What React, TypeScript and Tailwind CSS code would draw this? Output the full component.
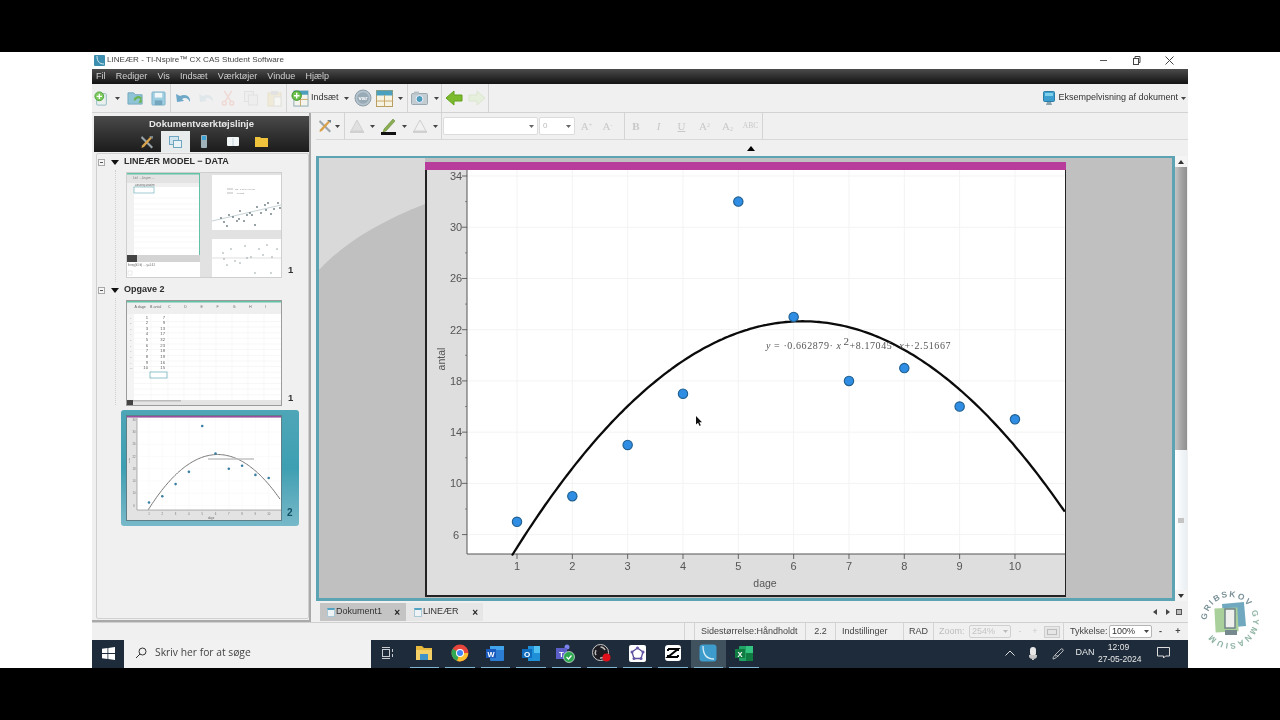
import React from "react";

const xs = (v: number) => 517 + (v - 1) * 55.33;
const ys = (v: number) => 534.6 - (v - 6) * 12.807;
const pts = [7, 9, 13, 17, 32, 23, 18, 19, 16, 15];
const f = (x: number) => -0.662879 * x * x + 8.17045 * x - 2.51667;
const curvePoints: string[] = [];
for (let x = 0.91; x < 10.9; x += 0.05) curvePoints.push(`${xs(x).toFixed(1)},${ys(f(x)).toFixed(1)}`);
curvePoints.push(`${xs(10.9).toFixed(1)},${ys(f(10.9)).toFixed(1)}`);
const curve = curvePoints.join(" ");

function Caret({ c = "#444" }: { c?: string }) {
  return <svg width="5" height="3" viewBox="0 0 5 3"><path d="M0 0h5L2.5 3z" fill={c} /></svg>;
}
function Slot({ className, children }: { className: string; children?: React.ReactNode }) {
  return <div className={`flex h-full shrink-0 items-center justify-center ${className}`}>{children}</div>;
}
function Sep({ className = "" }: { className?: string }) {
  return <div className={`h-full w-px shrink-0 bg-[#d4d4d4] ${className}`} />;
}

const NewDoc = () => (
  <svg width="15" height="15" viewBox="0 0 17 17"><rect x="3" y="3" width="11" height="13" rx="1" fill="#e9f0ee" stroke="#8bb6bf" /><circle cx="6" cy="6" r="5" fill="#7ccb5c" stroke="#4c9f3a" /><path d="M6 3v6M3 6h6" stroke="#fff" strokeWidth="1.500" /></svg>
);
const OpenDoc = () => (
  <svg width="17" height="16" viewBox="0 0 18 17"><path d="M1 3h6l2 2h7v10H1z" fill="#8fc3d6" stroke="#75a8bd" /><path d="M8 11a4 4 0 0 1 7-2" stroke="#6bb54f" strokeWidth="2.400" fill="none" /><path d="M12 14l4-1-1-5z" fill="#6bb54f" /></svg>
);
const Save = () => (
  <svg width="15" height="15" viewBox="0 0 16 16"><rect x="1" y="1" width="14" height="14" rx="1" fill="#9ccde0" stroke="#82b4ca" /><rect x="4" y="2" width="8" height="5" fill="#f2f7f9" /><rect x="4" y="10" width="8" height="5" fill="#74a7be" /></svg>
);
const Undo = ({ o = "#6da8c8" }: { o?: string }) => (
  <svg width="18" height="14" viewBox="0 0 18 14"><path d="M1 3l1 8 7-1-2-2c3-2 6-1 8 3 1-5-4-9-10-6z" fill={o} /></svg>
);
const Cut = () => (
  <svg width="14" height="16" viewBox="0 0 14 17" fill="none" stroke="#efd9d5" strokeWidth="1.600"><path d="M3 1l7 11M11 1L4 12" /><circle cx="3" cy="14" r="2" /><circle cx="11" cy="14" r="2" /></svg>
);
const Copy = () => (
  <svg width="16" height="16" viewBox="0 0 16 16" fill="#eeeeee" stroke="#e2e2e2"><rect x="1.500" y="1.500" width="9" height="10" /><rect x="5.500" y="5" width="9" height="10" /></svg>
);
const Paste = () => (
  <svg width="15" height="17" viewBox="0 0 15 17"><rect x="1" y="3" width="13" height="13" fill="#f0ead8" stroke="#e6dfcc" /><rect x="4" y="1" width="7" height="4" fill="#e2e2e2" /><rect x="7" y="7" width="7" height="9" fill="#f6f6f2" stroke="#e2e2e2" /></svg>
);
const Insert = () => (
  <svg width="18" height="17" viewBox="0 0 19 18"><rect x="3" y="1" width="15" height="16" fill="#f4f4ec" stroke="#8aa9b2" /><rect x="3" y="1" width="15" height="4" fill="#4aa0bd" /><path d="M10 5v12M3 10h15" stroke="#c6a868" /><circle cx="6" cy="6" r="5" fill="#6cc24a" stroke="#3c8f2a" /><path d="M6 3v6M3 6h6" stroke="#fff" strokeWidth="1.500" /></svg>
);
const Var = () => (
  <svg width="18" height="18" viewBox="0 0 18 18"><circle cx="9" cy="9" r="8" fill="#b4c3cc" stroke="#8d9ea9" /><circle cx="9" cy="9" r="5.800" fill="#97aab6" /><text x="9" y="11" textAnchor="middle" fontSize="6" fontWeight="700" fontFamily="Liberation Sans" fill="#fff">var</text></svg>
);
const TableIc = () => (
  <svg width="17" height="17" viewBox="0 0 17 17"><rect x="0.500" y="0.500" width="16" height="16" fill="#f7f3e3" stroke="#b99e63" /><rect x="0.500" y="0.500" width="16" height="5" fill="#4aa0bd" /><path d="M8.500 5v12M1 11h15" stroke="#c6a868" /></svg>
);
const Camera = () => (
  <svg width="17" height="14" viewBox="0 0 17 14"><rect x="0.500" y="2.500" width="16" height="11" rx="1" fill="#c2ccd1" stroke="#9aa8b0" /><rect x="3" y="0.500" width="5" height="3" fill="#b5c0c6" /><circle cx="8.500" cy="8" r="3.500" fill="#4d9dbd" stroke="#eef" /></svg>
);
const Arrow = ({ c, s, flip }: { c: string; s: string; flip?: boolean }) => (
  <svg width="18" height="16" viewBox="0 0 18 16" className={flip ? "-scale-x-100" : ""}><path d="M1 8l8-7v4h8v6H9v4z" fill={c} stroke={s} /></svg>
);
const Monitor = () => (
  <svg width="12" height="15" viewBox="0 0 12 15"><rect x="0.500" y="0.500" width="11" height="10" rx="1" fill="#3d9fd0" stroke="#2d7ea6" /><rect x="2" y="2" width="8" height="3" fill="#7fd0ea" /><path d="M4 11h4l1 3H3z" fill="#8aa3ad" /></svg>
);
const Tools = ({ w = 14 }: { w?: number }) => (
  <svg width={w} height={w} viewBox="0 0 14 14"><path d="M2 1l11 11-1.500 1.500L1 3z" fill="#9aa6ab" /><path d="M11 1l2 1-9 10-2.500 1L2 10.500z" fill="#d9a24d" /><path d="M9 1h4v3z" fill="#75858c" /></svg>
);
const TriUp = ({ c = "#e0e0e0", s = "#d0d0d0" }: { c?: string; s?: string }) => (
  <svg width="16" height="16" viewBox="0 0 16 16"><path d="M8 2l6 11H2z" fill={c} stroke={s} /><rect x="1" y="13" width="14" height="2" fill={s} /></svg>
);
const Pen = () => (
  <svg width="17" height="17" viewBox="0 0 17 17"><path d="M4 11L13 1l2 2-9 10-3 1z" fill="#8aae52" stroke="#5f7d2d" strokeWidth="0.500" /><rect x="1" y="14" width="15" height="3" fill="#111" /></svg>
);

function TB({ children, className = "" }: { children: React.ReactNode; className?: string }) {
  return <span className={`block text-center font-['Liberation_Serif',serif] text-[11px] text-[#c8c8c8] ${className}`}>{children}</span>;
}

function Thumb1() {
  return (
    <svg width="154" height="104" viewBox="0 0 154 104" className="block bg-white">
      <rect x="0" y="0" width="73" height="104" fill="#fff" />
      <rect x="0" y="1" width="73" height="9" fill="#e3e3e3" />
      <text x="6" y="6" fontSize="3" fill="#777" fontFamily="Liberation Sans">LinI …Lin.pm …</text>
      <rect x="0" y="10" width="73" height="4" fill="#efefef" />
      <text x="8" y="13" fontSize="3" fill="#666" fontFamily="Liberation Sans">=xsseq  =rasim</text>
      <rect x="0" y="10" width="7" height="72" fill="#f1f1f1" />
      <rect x="7" y="14" width="20" height="6" fill="#fff" stroke="#5fa9b4" strokeWidth="0.600" />
      <path d="M7 25h66M7 31h66M7 36h66M7 42h66M7 47h66M7 53h66M7 58h66M7 64h66M7 69h66M7 75h66" stroke="#f2f2f2" strokeWidth="0.600" />
      <rect x="0" y="82" width="73" height="7" fill="#d4d4d4" />
      <rect x="0" y="82" width="10" height="7" fill="#444" />
      <text x="1" y="93" fontSize="2.800" fill="#666" fontFamily="Liberation Sans">linreg(b1:b) …  y=1.61</text>
      <rect x="1" y="98" width="4" height="4" fill="#fff" stroke="#ccc" strokeWidth="0.400" />
      <rect x="0" y="0" width="73" height="1.500" fill="#63c2a6" />
      <rect x="72" y="0" width="1.500" height="82" fill="#63c2a6" />
      <rect x="73" y="0" width="81" height="104" fill="#e2e2e2" />
      <rect x="85" y="2" width="69" height="55" fill="#fff" />
      <rect x="85" y="66" width="69" height="38" fill="#fff" />
      <path d="M85 48L154 32" stroke="#9fb4b8" strokeWidth="0.600" />
      {[[94,45],[97,49],[100,53],[102,42],[106,44],[110,48],[113,38],[117,48],[120,42],[123,40],[128,52],[130,34],[134,40],[138,32],[141,30],[144,41],[147,36],[151,30],[153,35],[125,42],[112,46],[139,37]].map(([x, y], i) => (
        <circle key={i} cx={x} cy={y} r="0.900" fill="#66767c" />
      ))}
      <path d="M85 85h69" stroke="#bdbdbd" strokeWidth="0.500" />
      {[[96,80],[100,92],[104,76],[108,88],[113,90],[118,73],[124,84],[128,100],[132,76],[136,82],[140,72],[145,84],[150,76],[120,85],[97,86],[144,100]].map(([x, y], i) => (
        <circle key={i} cx={x} cy={y} r="0.700" fill="#7a8a90" />
      ))}
      <path d="M100 16h6M100 20h6" stroke="#777" strokeWidth="0.500" />
      <text x="108" y="17" fontSize="2.400" fill="#888" fontFamily="Liberation Sans">m1=1.6x(x)+k:0.87</text>
      <text x="108" y="21" fontSize="2.400" fill="#888" fontFamily="Liberation Sans">=1.600fit</text>
    </svg>
  );
}

function Thumb2() {
  const d = [7, 9, 13, 17, 32, 23, 18, 19, 16, 15];
  const cols = ["C", "D", "E", "F", "G", "H", "I"];
  return (
    <svg width="154" height="104" viewBox="0 0 154 104" className="block bg-white">
      <rect width="154" height="13" fill="#efefef" />
      <rect width="154" height="1.500" fill="#63c2a6" />
      <g fontSize="3.600" fill="#666" fontFamily="Liberation Sans">
        <text x="7.500" y="6.500">A dage</text>
        <text x="23" y="6.500">B antal</text>
        {cols.map((c, i) => <text key={c} x={41 + i * 16.200} y="6.500">{c}</text>)}
      </g>
      <rect y="13" width="7" height="86" fill="#f4f4f4" />
      <path d="M7 20.500h147M7 26h147M7 31.700h147M7 37.300h147M7 43h147M7 48.600h147M7 54.300h147M7 60h147M7 65.500h147M7 71.200h147M7 76.800h147M7 82.500h147M7 88h147M7 93.700h147" stroke="#f1f1f1" strokeWidth="0.600" />
      <path d="M24 13v86M41 13v86M57 13v86M73 13v86M89 13v86M105 13v86M121 13v86M137 13v86" stroke="#f4f4f4" strokeWidth="0.600" />
      {d.map((v, i) => (
        <g key={i} fontSize="4.200" fill="#5c5c5c" fontFamily="Liberation Sans">
          <text x="3" y={17.500 + i * 5.650} fontSize="2.400" fill="#aaa">{i + 1}</text>
          <text x="21" y={17.500 + i * 5.650} textAnchor="end">{i + 1}</text>
          <text x="38" y={17.500 + i * 5.650} textAnchor="end">{v}</text>
        </g>
      ))}
      <rect x="23" y="71" width="17" height="6" fill="#fff" stroke="#5fa9b4" strokeWidth="0.700" />
      <rect y="99" width="154" height="5" fill="#e4e4e4" />
      <rect x="0" y="99" width="54" height="1.500" fill="#bbb" />
      <rect x="0" y="99" width="6" height="5" fill="#444" />
    </svg>
  );
}

function Thumb3() {
  const tx = (v: number) => 22 + (v - 1) * 13.300;
  const ty = (v: number) => 89.500 - (v - 6) * 3.060;
  const p: string[] = [];
  for (let x = 0.95; x <= 10.9; x += 0.1) p.push(`${tx(x).toFixed(1)},${ty(f(x)).toFixed(1)}`);
  return (
    <svg width="154" height="104" viewBox="0 0 154 104" className="block">
      <rect width="154" height="104" fill="#e3e3e3" />
      <rect x="10" y="2" width="144" height="92" fill="#fff" />
      <rect width="154" height="1.500" fill="#9a4fa0" />
      {[6, 10, 14, 18, 22, 26, 30, 34].map((v) => (
        <g key={v}>
          <path d={`M10 ${ty(v)}h144`} stroke="#f6f6f6" strokeWidth="0.500" />
          <text x="7" y={ty(v) + 1} fontSize="2.800" textAnchor="middle" fill="#777" fontFamily="Liberation Sans">{v}</text>
        </g>
      ))}
      {pts.map((v, i) => (
        <g key={i}>
          <path d={`M${tx(i + 1)} 2v92`} stroke="#f7f7f7" strokeWidth="0.500" />
          <text x={tx(i + 1)} y="98.500" fontSize="2.800" textAnchor="middle" fill="#777" fontFamily="Liberation Sans">{i + 1}</text>
        </g>
      ))}
      <path d="M10 2v92h144" fill="none" stroke="#666" strokeWidth="0.500" />
      <polyline points={p.join(" ")} fill="none" stroke="#777" strokeWidth="1" />
      {pts.map((v, i) => <circle key={i} cx={tx(i + 1)} cy={ty(v)} r="1.300" fill="#3a7ea3" />)}
      <rect x="81" y="42" width="46" height="2" fill="#bdbdbd" opacity="0.700" />
      <text x="81" y="103" fontSize="2.800" fill="#666" fontFamily="Liberation Sans">dage</text>
      <text x="3" y="47" fontSize="2.400" fill="#666" fontFamily="Liberation Sans" transform="rotate(-90 3 47)">antal</text>
    </svg>
  );
}

function TreeHead({ label }: { label: string }) {
  return (
    <div className="flex h-[16px] shrink-0 items-center">
      <div className="ml-[1px] flex h-[7px] w-[7px] items-center justify-center border border-[#a8a8a8] bg-[#f6f6f6]"><div className="h-px w-[3px] bg-[#555]" /></div>
      <div className="ml-[6px] h-0 w-0 border-x-[4px] border-t-[5px] border-x-transparent border-t-[#111]" />
      <span className="ml-[5px] text-[9px] font-bold text-[#2c2c2c]">{label}</span>
    </div>
  );
}

function Plot() {
  return (
    <svg width="641" height="435" viewBox="425 162 641 435" className="block">
      <rect x="425" y="162" width="641" height="435" fill="#dedede" />
      <rect x="467" y="170" width="598" height="384" fill="#fff" />
      {[6, 10, 14, 18, 22, 26, 30, 34].map((v) => (
        <g key={v}>
          <path d={`M467 ${ys(v)}H1065`} stroke="#f3f3f3" />
          <path d={`M462 ${ys(v)}H467`} stroke="#666" />
          {v < 34 && <path d={`M465 ${ys(v + 2)}H467`} stroke="#888" />}
          <text x="456" y={ys(v) + 4} fontSize="11" textAnchor="middle" fill="#555" fontFamily="Liberation Sans">{v}</text>
        </g>
      ))}
      {pts.map((_, i) => (
        <g key={i}>
          <path d={`M${xs(i + 1)} 170V554`} stroke="#f3f3f3" />
          <path d={`M${xs(i + 1)} 554v5`} stroke="#666" />
          <text x={xs(i + 1)} y="570" fontSize="11" textAnchor="middle" fill="#555" fontFamily="Liberation Sans">{i + 1}</text>
        </g>
      ))}
      <path d="M467 170V554H1065" fill="none" stroke="#555" />
      <text x="445" y="359" fontSize="10.500" textAnchor="middle" fill="#555" fontFamily="Liberation Sans" transform="rotate(-90 445 359)">antal</text>
      <text x="765" y="587" fontSize="10.500" textAnchor="middle" fill="#555" fontFamily="Liberation Sans">dage</text>
      <polyline points={curve} fill="none" stroke="#0b0b0b" strokeWidth="2.300" />
      {pts.map((v, i) => (
        <circle key={i} cx={xs(i + 1)} cy={ys(v)} r="4.700" fill="#2f8de4" stroke="#1f5f8f" strokeWidth="1.100" />
      ))}
      <text x="766" y="349" fontSize="10" fill="#555" fontFamily="Liberation Serif" letterSpacing="0.580">
        <tspan fontStyle="italic">y</tspan> = ·0.662879· <tspan fontStyle="italic">x</tspan>
        <tspan dy="-4" dx="2" fontSize="11">2</tspan><tspan dy="4">+8.17045· <tspan fontStyle="italic">x</tspan>+·2.51667</tspan>
      </text>
      <path d="M696 416v8.500l2-1.800 1.600 3.300 1.200-.7-1.500-3.100h2.700z" fill="#111" />
      <rect x="425" y="162" width="641" height="8" fill="#b83c9c" />
      <rect x="425" y="170" width="2" height="427" fill="#222" />
      <rect x="1065" y="170" width="1.500" height="427" fill="#222" />
      <rect x="425" y="595" width="641" height="2" fill="#222" />
    </svg>
  );
}

function Logo() {
  return (
    <svg width="64" height="64" viewBox="0 0 64 64" className="block">
      <defs>
        <path id="ring" d="M9 33A23 23 0 1 1 55 33A23 23 0 1 1 9 33" />
      </defs>
      <rect x="25" y="16" width="22" height="24" fill="#6fa8bf" transform="rotate(-5 36 28)" />
      <rect x="17" y="21" width="23" height="24" fill="#a9cf9a" transform="rotate(-3 28 33)" />
      <rect x="27" y="22" width="10" height="19" fill="#eef0ee" stroke="#6d7f85" strokeWidth="1.400" />
      <rect x="27" y="43" width="12" height="5" fill="#76898e" />
      <text fontSize="8.400" fontFamily="Liberation Sans" fontWeight="700" letterSpacing="1.700">
        <textPath href="#ring">
          <tspan fill="#7a9198">GRIBSKOV</tspan>
          <tspan fill="#8fb4a4"> GYMNASIUM</tspan>
        </textPath>
      </text>
    </svg>
  );
}

const Win = () => <svg width="13" height="13" viewBox="0 0 13 13" fill="#fff"><path d="M0 1.800l5.500-.8v5H0zM6.300 1L13 0v6H6.300zM0 7h5.500v5L0 11.200zM6.300 7H13v6l-6.700-1z" /></svg>;
const Chrome = () => (
  <svg width="18" height="18" viewBox="0 0 18 18"><circle cx="9" cy="9" r="8.500" fill="#e8453c" /><path d="M9 9L1.600 4.800A8.500 8.500 0 0 0 6 17z" fill="#33a853" /><path d="M9 9h8.200A8.500 8.500 0 0 1 6 17z" fill="#fbc02d" /><circle cx="9" cy="9" r="4" fill="#fff" /><circle cx="9" cy="9" r="3" fill="#4285f4" /></svg>
);
const Word = () => (
  <svg width="18" height="17" viewBox="0 0 18 17"><rect x="4" y="1" width="14" height="15" rx="1" fill="#2b7cd3" /><rect x="4" y="1" width="14" height="4" fill="#41a5ee" /><rect x="0" y="4" width="10" height="9" fill="#185abd" /><text x="5" y="11.500" textAnchor="middle" fontSize="7.500" fontWeight="700" fontFamily="Liberation Sans" fill="#fff">W</text></svg>
);
const Outlook = () => (
  <svg width="18" height="17" viewBox="0 0 18 17"><rect x="6" y="1" width="12" height="15" fill="#1f8fd8" /><rect x="12" y="1" width="6" height="7" fill="#50c1f0" /><rect x="0" y="4" width="10" height="9" fill="#0f6cbd" /><text x="5" y="11.500" textAnchor="middle" fontSize="8" fontWeight="700" fontFamily="Liberation Sans" fill="#fff">O</text></svg>
);
const Teams = () => (
  <svg width="20" height="19" viewBox="0 0 20 19"><circle cx="11" cy="3" r="2.500" fill="#7b83eb" /><rect x="0" y="4" width="11" height="11" fill="#5b5fc7" /><text x="5.500" y="12.500" textAnchor="middle" fontSize="8" fontWeight="700" fontFamily="Liberation Sans" fill="#fff">T</text><circle cx="13" cy="13" r="5.500" fill="#2da84f" stroke="#fff" strokeWidth="0.600" /><path d="M10.500 13l2 2 3-3.500" fill="none" stroke="#fff" strokeWidth="1.200" /></svg>
);
const Obs = () => (
  <svg width="19" height="18" viewBox="0 0 19 18"><circle cx="8.500" cy="8.500" r="8" fill="#1c1c22" stroke="#ccc" /><path d="M8.500 3a5 5 0 0 1 4.500 3M4 11a5 5 0 0 1 0-5M8 14a5 5 0 0 0 5-3" stroke="#bbb" strokeWidth="1.500" fill="none" /><circle cx="14.500" cy="13.500" r="4" fill="#e0111b" /></svg>
);
const Geo = () => (
  <svg width="17" height="17" viewBox="0 0 17 17"><rect width="17" height="17" rx="2" fill="#fff" /><path d="M8.500 3L14 7l-2 6.500H5L3 7z" fill="none" stroke="#5c4d99" strokeWidth="1.300" /><g fill="#6557a8"><circle cx="8.500" cy="3" r="1.500" /><circle cx="14" cy="7" r="1.500" /><circle cx="12" cy="13.500" r="1.500" /><circle cx="5" cy="13.500" r="1.500" /><circle cx="3" cy="7" r="1.500" /></g></svg>
);
const Capcut = () => (
  <svg width="16" height="16" viewBox="0 0 16 16"><rect width="16" height="16" rx="3" fill="#fff" /><path d="M3 4h10L3 12h10" fill="none" stroke="#000" strokeWidth="2" /><path d="M3 4v2M13 4v2M3 10v2M13 10v2" stroke="#000" strokeWidth="2" /></svg>
);
const Nspire = () => (
  <svg width="18" height="18" viewBox="0 0 18 18"><rect x="0.500" y="0.500" width="17" height="17" rx="3" fill="#3d9ccb" /><path d="M4 2c0 8 3 13 11 13" fill="none" stroke="#d7eef7" strokeWidth="1.300" /></svg>
);
const Excel = () => (
  <svg width="18" height="17" viewBox="0 0 18 17"><rect x="4" y="1" width="14" height="15" rx="1" fill="#21a366" /><rect x="11" y="1" width="7" height="7" fill="#33c481" /><rect x="11" y="8" width="7" height="8" fill="#107c41" /><rect x="0" y="4" width="10" height="9" fill="#107c41" /><text x="5" y="11.500" textAnchor="middle" fontSize="7.500" fontWeight="700" fontFamily="Liberation Sans" fill="#fff">X</text></svg>
);

function TaskIcon({ children, active, run = true }: { children: React.ReactNode; active?: boolean; run?: boolean }) {
  return (
    <div className={`relative flex h-full w-[35.5px] shrink-0 items-center justify-center pb-[2px] ${active ? "bg-[#41525f]" : ""}`}>
      {children}
      {run && <div className="absolute inset-x-[3px] bottom-0 h-px bg-[#7fb4d4]" />}
    </div>
  );
}

export default function App() {
  return (
    <div className="flex h-[720px] w-[1280px] flex-col overflow-hidden bg-black font-['Liberation_Sans',sans-serif] text-[#333] blur-[0.4px]">
      <div className="h-[52px] shrink-0 bg-black" />
      <div className="flex h-[616px] shrink-0 bg-white">
        <div className="w-[92px] shrink-0 bg-white" />
        <div className="flex w-[1096px] shrink-0 flex-col bg-[#f0f0f0]">
          {/* title */}
          <div className="flex h-[17px] shrink-0 items-center bg-white">
            <svg width="11" height="11" viewBox="0 0 11 11" className="ml-[2px]"><rect width="11" height="11" rx="1" fill="#3c8fb0" /><path d="M3 1c0 5 2 8 7 8" fill="none" stroke="#d8eef6" strokeWidth="1" /></svg>
            <span className="ml-[2px] text-[8.100px] text-[#444]">LINEÆR - TI-Nspire™ CX CAS Student Software</span>
            <div className="ml-auto flex h-full items-center">
              <Slot className="w-[33px]"><div className="h-px w-[7px] bg-[#555]" /></Slot>
              <Slot className="w-[33px]"><svg width="9" height="9" viewBox="0 0 9 9" fill="none" stroke="#444"><rect x="1.500" y="2.500" width="5" height="6" /><path d="M3 2.500V.5h5v6H6.500" /></svg></Slot>
              <Slot className="mr-[2px] w-[33px]"><svg width="9" height="9" viewBox="0 0 9 9" stroke="#444"><path d="M.5.5l8 8M8.500.5l-8 8" /></svg></Slot>
            </div>
          </div>
          {/* menu */}
          <div className="flex h-[15px] shrink-0 items-center gap-[10.200px] bg-gradient-to-b from-[#4c4c4c] to-[#141414] pl-[4px] text-[9px] text-[#d0d0d0]">
            <span>Fil</span><span>Rediger</span><span>Vis</span><span>Indsæt</span><span>Værktøjer</span><span>Vindue</span><span>Hjælp</span>
          </div>
          {/* toolbar */}
          <div className="flex h-[29px] shrink-0 items-center border-b border-[#d2d2d2] bg-[#f0f0f0]">
            <Slot className="w-[17px] pl-[2px]"><NewDoc /></Slot>
            <Slot className="w-[16px]"><Caret /></Slot>
            <Slot className="w-[21px]"><OpenDoc /></Slot>
            <Slot className="w-[24px]"><Save /></Slot>
            <Sep />
            <Slot className="w-[25px]"><Undo /></Slot>
            <Slot className="w-[21px]"><Undo o="#dfe7ea" /></Slot>
            <Slot className="w-[22px]"><Cut /></Slot>
            <Slot className="w-[23px]"><Copy /></Slot>
            <Slot className="w-[24px]"><Paste /></Slot>
            <Sep />
            <Slot className="w-[24px] justify-end pr-[2px]"><Insert /></Slot>
            <Slot className="w-[29px] justify-start text-[9px] text-[#333]">Indsæt</Slot>
            <Slot className="w-[12px]"><Caret /></Slot>
            <Slot className="w-[21px]"><Var /></Slot>
            <Slot className="w-[22px]"><TableIc /></Slot>
            <Slot className="w-[10px]"><Caret /></Slot>
            <Sep className="ml-[2px]" />
            <Slot className="w-[23px]"><Camera /></Slot>
            <Slot className="w-[10px]"><Caret /></Slot>
            <Sep />
            <Slot className="w-[24px]"><Arrow c="#7dbb2e" s="#62a01c" /></Slot>
            <Slot className="w-[22px]"><Arrow c="#e6efdb" s="#dbe6d0" flip /></Slot>
            <Sep />
            <div className="ml-auto flex h-full items-center">
              <Monitor />
              <span className="ml-[3px] text-[9px] text-[#333]">Eksempelvisning af dokument</span>
              <Slot className="w-[10px]"><Caret /></Slot>
            </div>
          </div>
          {/* main */}
          <div className="flex h-[509px] shrink-0">
            <div className="flex h-full w-[219px] shrink-0 flex-col border-r-2 border-b-2 border-[#a9a9a9] pt-[3px] pl-[2px]">
              <div className="flex h-[36px] w-[215px] shrink-0 flex-col bg-gradient-to-b from-[#4a4a4a] to-[#1c1c1c]">
                <div className="h-[15px] text-center text-[9.500px] leading-[15px] font-bold text-[#e8e8e8]">Dokumentværktøjslinje</div>
                <div className="flex h-[21px] items-center pl-[43px]">
                  <Slot className="w-[24px] pr-[4px]"><Tools /></Slot>
                  <Slot className="w-[29px] bg-[#e8ecec]"><svg width="13" height="12" viewBox="0 0 13 12"><rect x="0.500" y="0.500" width="9" height="8" fill="#cfe4ee" stroke="#6fa6c0" /><rect x="4.500" y="4.500" width="8" height="7" fill="#e9f3f7" stroke="#6fa6c0" /></svg></Slot>
                  <Slot className="w-[28px]"><svg width="6" height="13" viewBox="0 0 6 13"><rect width="6" height="13" rx="1" fill="#9fb2ba" /><rect x="1" y="1" width="4" height="4" fill="#3fa4d6" /></svg></Slot>
                  <Slot className="w-[29px]"><svg width="12" height="9" viewBox="0 0 12 9"><rect width="12" height="9" rx="1" fill="#f2f6f7" /><path d="M6 1v8" stroke="#c4d4da" /></svg></Slot>
                  <Slot className="w-[28px]"><svg width="13" height="10" viewBox="0 0 13 10"><path d="M0 0h5l1 1h7v9H0z" fill="#f0c33c" /></svg></Slot>
                </div>
              </div>
              <div className="mt-px ml-[2px] flex h-[466px] w-[213px] flex-col rounded-[2px] border border-[#d0d0d0] bg-[#f0f0f0]">
                <TreeHead label="LINEÆR MODEL − DATA" />
                <div className="ml-[18px] flex h-[112px] shrink-0 items-end border-l border-dotted border-[#cfcfcf] pl-[11px]">
                  <div className="mb-[5px] shrink-0 bg-white shadow-[0_0_0_1px_#cfcfcf]"><Thumb1 /></div>
                  <span className="mb-[5px] ml-[7px] text-[9.500px] font-bold text-[#333]">1</span>
                </div>
                <TreeHead label="Opgave 2" />
                <div className="ml-[18px] flex h-[107px] shrink-0 items-end border-l border-dotted border-[#cfcfcf] pl-[11px]">
                  <div className="shrink-0 bg-white shadow-[0_0_0_1px_#9b9b9b]"><Thumb2 /></div>
                  <span className="ml-[7px] text-[9.500px] font-bold text-[#333]">1</span>
                </div>
                <div className="mt-[5px] ml-[24px] flex h-[116px] w-[178px] shrink-0 items-end rounded-[3px] bg-gradient-to-b from-[#4ea6b7] via-[#3e9fb2] to-[#77b9c9] p-[6px] pr-0">
                  <div className="shrink-0 shadow-[0_0_0_1px_#5f7f88]"><Thumb3 /></div>
                  <span className="ml-[6px] text-[10px] font-bold text-[#155064]">2</span>
                </div>
              </div>
            </div>
            <div className="ml-[5px] flex min-w-0 flex-1 flex-col">
              {/* doc toolbar */}
              <div className="flex h-[27px] shrink-0 items-center border-b border-[#d8d8d8]">
                <Slot className="w-[17px]"><Tools /></Slot>
                <Slot className="w-[8px]"><Caret /></Slot>
                <Sep className="ml-[3px]" />
                <Slot className="w-[23px]"><TriUp /></Slot>
                <Slot className="w-[9px]"><Caret /></Slot>
                <Slot className="w-[23px]"><Pen /></Slot>
                <Slot className="w-[8px]"><Caret /></Slot>
                <Slot className="w-[24px]"><TriUp c="#f1f1f1" /></Slot>
                <Slot className="w-[7px]"><Caret /></Slot>
                <Sep className="ml-[2px]" />
                <div className="ml-[1px] flex h-[18px] w-[95px] items-center justify-end rounded-[2px] border border-[#dcdcdc] bg-white pr-[3px]"><Caret c="#666" /></div>
                <div className="ml-[1px] flex h-[18px] w-[36px] items-center justify-between rounded-[2px] border border-[#dcdcdc] bg-white px-[3px] text-[8px] text-[#bbb]"><span>0</span><Caret c="#666" /></div>
                <Slot className="w-[23px]"><TB>A<sup className="text-[6px]">+</sup></TB></Slot>
                <Slot className="w-[19px]"><TB>A<sup className="text-[6px]">-</sup></TB></Slot>
                <Sep className="ml-[7px]" />
                <Slot className="w-[22px]"><TB className="font-bold">B</TB></Slot>
                <Slot className="w-[23px]"><TB className="italic">I</TB></Slot>
                <Slot className="w-[23px]"><TB className="underline">U</TB></Slot>
                <Slot className="w-[23px]"><TB>A<sup className="text-[6px]">2</sup></TB></Slot>
                <Slot className="w-[23px]"><TB>A<sub className="text-[6px]">2</sub></TB></Slot>
                <Slot className="w-[23px]"><span className="font-['Liberation_Serif',serif] text-[7.500px] text-[#c8c8c8]">ABC</span></Slot>
                <Sep />
              </div>
              <div className="flex h-[16px] shrink-0 items-center">
                <div className="ml-[431px] h-0 w-0 border-x-[4px] border-b-[5px] border-x-transparent border-b-black" />
              </div>
              {/* doc area */}
              <div className="flex h-[445px] shrink-0">
                <div className="relative flex h-full w-[859px] shrink-0 overflow-hidden border-[3px] border-t-[2px] border-[#5ca3b3] bg-[#c0c0c0] pt-[4px] pl-[106px]">
                  <svg className="absolute top-0 left-0" width="106" height="190" viewBox="0 0 106 190"><path d="M0 0H106V46C60 64 25 85 0 112z" fill="#d9d9d9" /></svg>
                  <div className="relative shrink-0"><Plot /></div>
                </div>
                <div className="flex h-full w-[12px] shrink-0 flex-col bg-white">
                  <div className="flex h-[11px] items-center justify-center bg-[#f4f4f4]"><div className="h-0 w-0 border-x-[3px] border-b-[4px] border-x-transparent border-b-[#333]" /></div>
                  <div className="h-[283px] bg-gradient-to-r from-[#c4c4c4] via-[#a5a5a5] to-[#8f8f8f]" />
                  <div className="flex flex-1 items-center justify-center bg-gradient-to-r from-white to-[#e8eef2]"><div className="h-[5px] w-[6px] bg-[#c4c4c4]" /></div>
                  <div className="flex h-[11px] items-center justify-center bg-[#f4f4f4]"><div className="h-0 w-0 border-x-[3px] border-t-[4px] border-x-transparent border-t-[#333]" /></div>
                </div>
              </div>
              {/* tabs */}
              <div className="flex h-[21px] shrink-0 items-start pt-[2px] pl-[4px]">
                <div className="flex h-[18px] w-[86px] items-center bg-[#c4c4c4] pl-[7px] text-[9px] text-[#333]">
                  <div className="h-[9px] w-[8px] border border-t-[2px] border-[#a9c9d6] border-t-[#52a3c2] bg-[#eef4f6]" />
                  <span className="ml-[1px]">Dokument1</span>
                  <span className="mr-[6px] ml-auto text-[10px] font-bold text-[#222]">×</span>
                </div>
                <div className="flex h-[18px] w-[77px] items-center bg-[#e6e6e6] pl-[8px] text-[9px] text-[#333]">
                  <div className="h-[9px] w-[8px] border border-t-[2px] border-[#a9c9d6] border-t-[#52a3c2] bg-[#eef4f6]" />
                  <span className="ml-[1px]">LINEÆR</span>
                  <span className="mr-[5px] ml-auto text-[10px] font-bold text-[#222]">×</span>
                </div>
                <div className="ml-auto flex h-[18px] items-center gap-[6px] pr-[6px]">
                  <div className="h-0 w-0 border-y-[3px] border-r-[4px] border-y-transparent border-r-[#444]" />
                  <div className="ml-[3px] h-0 w-0 border-y-[3px] border-l-[4px] border-y-transparent border-l-[#444]" />
                  <div className="h-[6px] w-[6px] border border-[#555] bg-[#bbb]" />
                </div>
              </div>
            </div>
          </div>
          {/* status */}
          <div className="flex h-[18px] shrink-0 items-center border-t border-[#d0d0d0] bg-[#f0f0f0] pl-[592px] text-[9px] text-[#444]">
            <Sep /><div className="w-[9px]" /><Sep />
            <Slot className="w-[110px] justify-start pl-[6px]">Sidestørrelse:Håndholdt</Slot><Sep />
            <Slot className="w-[29px]">2.2</Slot><Sep />
            <Slot className="w-[67px] justify-start pl-[6px]">Indstillinger</Slot><Sep />
            <Slot className="w-[29px]">RAD</Slot><Sep />
            <Slot className="w-[35px] justify-start pl-[5px] text-[#bdbdbd]">Zoom:</Slot>
            <div className="flex h-[13px] w-[42px] items-center justify-between rounded-[2px] border border-[#cfcfcf] px-[2px] text-[#c4c4c4]"><span>254%</span><Caret c="#bbb" /></div>
            <Slot className="w-[18px] text-[#ccc]">-</Slot>
            <Slot className="w-[12px] text-[#ccc]">+</Slot>
            <Slot className="w-[22px]"><div className="flex h-[12px] w-[16px] items-center justify-center border border-[#cfcfcf] bg-[#e6e6e6]"><div className="h-[6px] w-[10px] border border-[#bbb]" /></div></Slot>
            <Sep />
            <Slot className="w-[45px] justify-start pl-[6px]">Tykkelse:</Slot>
            <div className="flex h-[13px] w-[43px] items-center justify-between rounded-[2px] border border-[#b4b4b4] bg-white px-[2px] text-[#333]"><span>100%</span><Caret /></div>
            <Slot className="w-[17px] font-bold">-</Slot>
            <Slot className="w-[18px] font-bold">+</Slot>
          </div>
          {/* taskbar */}
          <div className="flex h-[28px] shrink-0 items-center bg-[#1d2b3a] text-white">
            <Slot className="w-[32px] pb-[2px]"><Win /></Slot>
            <div className="flex h-full w-[247px] shrink-0 items-center bg-[#f1f1f1] pb-[2px] pl-[11px] font-['Open_Sans',sans-serif] text-[10.300px] text-[#444]">
              <svg width="12" height="12" viewBox="0 0 12 12" fill="none" stroke="#333" strokeWidth="1"><circle cx="7.500" cy="4.500" r="3.500" /><path d="M5 7l-4 4" /></svg>
              <span className="ml-[8px]">Skriv her for at søge</span>
            </div>
            <TaskIcon run={false}><svg width="13" height="12" viewBox="0 0 13 12" fill="none" stroke="#c8ccd0"><rect x="0.500" y="2.500" width="7" height="7" /><path d="M0 .5h8M0 11.500h8M10.500 2v3M10.500 7v3" /></svg></TaskIcon>
            <TaskIcon><svg width="16" height="14" viewBox="0 0 16 14"><path d="M0 0h6l2 2h8v12H0z" fill="#e8b93c" /><rect x="0" y="4" width="16" height="10" fill="#f4d067" /><rect x="4" y="8" width="8" height="6" fill="#3f93c9" /></svg></TaskIcon>
            <TaskIcon><Chrome /></TaskIcon>
            <TaskIcon><Word /></TaskIcon>
            <TaskIcon><Outlook /></TaskIcon>
            <TaskIcon><Teams /></TaskIcon>
            <TaskIcon><Obs /></TaskIcon>
            <TaskIcon><Geo /></TaskIcon>
            <TaskIcon><Capcut /></TaskIcon>
            <TaskIcon active><Nspire /></TaskIcon>
            <TaskIcon><Excel /></TaskIcon>
            <div className="ml-auto flex h-full items-center pb-[2px] text-[#e8e8e8]">
              <Slot className="w-[24px]"><svg width="10" height="6" viewBox="0 0 10 6" fill="none" stroke="#ddd"><path d="M.5 5.500L5 1l4.500 4.500" /></svg></Slot>
              <Slot className="w-[22px]"><svg width="8" height="13" viewBox="0 0 8 13"><rect x="1" y="0" width="6" height="9" rx="3" fill="#e8e8e8" /><path d="M0 8h8v1a4 3 0 0 1-8 0zM3 11h2v2H3z" fill="#c8c8c8" /></svg></Slot>
              <Slot className="w-[28px]"><svg width="13" height="13" viewBox="0 0 13 13" fill="none" stroke="#ddd" strokeWidth="0.800"><path d="M1 12c0-2 1-3 3-5l5-5c1-1 3 1 2 2l-5 5c-2 2-4 3-5 3zM3 9c2-1 3 0 3 1" /></svg></Slot>
              <Slot className="w-[26px] text-[9px]">DAN</Slot>
              <div className="w-[41px] text-center text-[8.500px] leading-[12px] whitespace-nowrap"><div>12:09</div><div>27-05-2024</div></div>
              <Slot className="w-[49px]"><svg width="13" height="12" viewBox="0 0 13 12" fill="none" stroke="#ddd"><path d="M.5.5h12v8.500H8.500l-2 2v-2h-6z" /></svg></Slot>
            </div>
          </div>
        </div>
        <div className="flex w-[92px] shrink-0 items-end justify-center bg-white pr-[8px] pb-[17px]"><Logo /></div>
      </div>
      <div className="h-[52px] shrink-0 bg-black" />
    </div>
  );
}
